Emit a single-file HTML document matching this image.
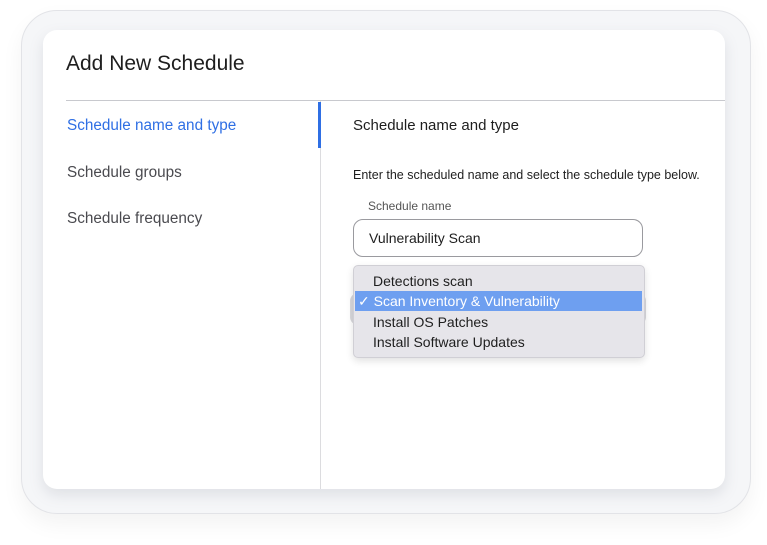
<!DOCTYPE html>
<html><head><style>
body{margin:0;width:767px;height:545px;background:#fff;position:relative;overflow:hidden;font-family:"Liberation Sans",Arial,sans-serif}
.outer{position:absolute;left:21px;top:10px;width:728px;height:502px;border-radius:36px;background:#f5f6f8;border:1px solid #e2e3e7;box-shadow:0 10px 22px rgba(0,0,0,0.05)}
.inner{position:absolute;left:43px;top:30px;width:682px;height:459px;border-radius:14px;background:#fff;box-shadow:0 6px 14px rgba(120,125,145,0.18)}
.abs{position:absolute;white-space:nowrap}
</style></head><body>
<div class="outer"></div>
<div class="inner"></div>
<div class="abs" style="left:66px;top:52px;font-size:21px;color:#1e1e1e">Add New Schedule</div>
<div class="abs" style="left:66px;top:100px;width:659px;height:1px;background:#c8c9ce"></div>
<div class="abs" style="left:320px;top:101px;width:1px;height:388px;background:#dcdcdf"></div>
<div class="abs" style="left:318px;top:102px;width:3px;height:46px;background:#2f6fe4"></div>
<div class="abs" style="left:67px;top:117px;font-size:15.3px;color:#2f6fe4">Schedule name and type</div>
<div class="abs" style="left:67px;top:164px;font-size:15.3px;color:#4a4a4f">Schedule groups</div>
<div class="abs" style="left:67px;top:210px;font-size:15.3px;color:#4a4a4f">Schedule frequency</div>
<div class="abs" style="left:353px;top:117px;font-size:15px;color:#1e1e1e">Schedule name and type</div>
<div class="abs" style="left:353px;top:168px;font-size:12.5px;color:#1e1e1e">Enter the scheduled name and select the schedule type below.</div>
<div class="abs" style="left:368px;top:199px;font-size:12px;color:#555">Schedule name</div>
<div class="abs" style="left:353px;top:219px;width:288px;height:36px;border:1px solid #9a9a9f;border-radius:10px;background:#fff"></div>
<div class="abs" style="left:369px;top:230px;font-size:14px;color:#1e1e1e">Vulnerability Scan</div>
<div class="abs" style="left:350px;top:293px;width:296px;height:32px;background:#d8d8dc;border-radius:8px"></div>
<div class="abs" style="left:353px;top:265px;width:290px;height:91px;background:#e6e5ea;border:1px solid #d0cfd5;border-radius:5px;box-shadow:0 3px 8px rgba(0,0,0,0.12)"></div>
<div class="abs" style="left:355px;top:291px;width:287px;height:20px;background:#6e9ff0"></div>
<div class="abs" style="left:373px;top:273px;font-size:14px;color:#1e1e1e">Detections scan</div>
<div class="abs" style="left:358px;top:293px;font-size:14px;color:#fff">✓ Scan Inventory &amp; Vulnerability</div>
<div class="abs" style="left:373px;top:314px;font-size:14px;color:#1e1e1e">Install OS Patches</div>
<div class="abs" style="left:373px;top:334px;font-size:14px;color:#1e1e1e">Install Software Updates</div>
</body></html>
